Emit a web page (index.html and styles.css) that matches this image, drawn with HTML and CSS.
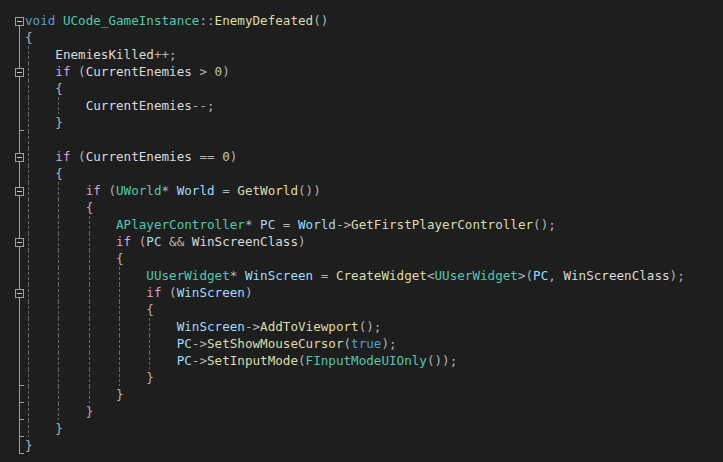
FILE: index.html
```html
<!DOCTYPE html>
<html lang="en">
<head>
  <meta charset="UTF-8" />
  <title>UCode_GameInstance.cpp</title>
  <link rel="stylesheet" href="styles.css">
</head>
<body>

<!-- Editor -->
<div class="editor">
  <div class="line"><div class="fold first"><span class="box"></span></div><div class="code"><span class="kw">void</span> <span class="ty">UCode_GameInstance</span>::<span class="fn">EnemyDefeated</span>()</div></div>
  <div class="line"><div class="fold"></div><div class="code">{</div></div>
  <div class="line"><div class="fold"></div><div class="code"><span class="ind"></span><span class="mem">EnemiesKilled</span>++;</div></div>
  <div class="line"><div class="fold"><span class="box"></span></div><div class="code"><span class="ind"></span><span class="ctl">if</span> (<span class="mem">CurrentEnemies</span> &gt; <span class="num">0</span>)</div></div>
  <div class="line"><div class="fold"></div><div class="code"><span class="ind"></span>{</div></div>
  <div class="line"><div class="fold"></div><div class="code"><span class="ind"></span><span class="ind"></span><span class="mem">CurrentEnemies</span>--;</div></div>
  <div class="line"><div class="fold end"></div><div class="code"><span class="ind"></span>}</div></div>
  <div class="line"><div class="fold"></div><div class="code"><span class="ind"></span></div></div>
  <div class="line"><div class="fold"><span class="box"></span></div><div class="code"><span class="ind"></span><span class="ctl">if</span> (<span class="mem">CurrentEnemies</span> == <span class="num">0</span>)</div></div>
  <div class="line"><div class="fold"></div><div class="code"><span class="ind"></span>{</div></div>
  <div class="line"><div class="fold"><span class="box"></span></div><div class="code"><span class="ind"></span><span class="ind"></span><span class="ctl">if</span> (<span class="ty">UWorld</span>* <span class="loc">World</span> = <span class="fn">GetWorld</span>())</div></div>
  <div class="line"><div class="fold"></div><div class="code"><span class="ind"></span><span class="ind"></span>{</div></div>
  <div class="line"><div class="fold"></div><div class="code"><span class="ind"></span><span class="ind"></span><span class="ind"></span><span class="ty">APlayerController</span>* <span class="loc">PC</span> = <span class="loc">World</span>-&gt;<span class="fn">GetFirstPlayerController</span>();</div></div>
  <div class="line"><div class="fold"><span class="box"></span></div><div class="code"><span class="ind"></span><span class="ind"></span><span class="ind"></span><span class="ctl">if</span> (<span class="loc">PC</span> &amp;&amp; <span class="mem">WinScreenClass</span>)</div></div>
  <div class="line"><div class="fold"></div><div class="code"><span class="ind"></span><span class="ind"></span><span class="ind"></span>{</div></div>
  <div class="line"><div class="fold"></div><div class="code"><span class="ind"></span><span class="ind"></span><span class="ind"></span><span class="ind"></span><span class="ty">UUserWidget</span>* <span class="loc">WinScreen</span> = <span class="fn">CreateWidget</span>&lt;<span class="ty">UUserWidget</span>&gt;(<span class="loc">PC</span>, <span class="mem">WinScreenClass</span>);</div></div>
  <div class="line"><div class="fold"><span class="box"></span></div><div class="code"><span class="ind"></span><span class="ind"></span><span class="ind"></span><span class="ind"></span><span class="ctl">if</span> (<span class="loc">WinScreen</span>)</div></div>
  <div class="line"><div class="fold"></div><div class="code"><span class="ind"></span><span class="ind"></span><span class="ind"></span><span class="ind"></span>{</div></div>
  <div class="line"><div class="fold"></div><div class="code"><span class="ind"></span><span class="ind"></span><span class="ind"></span><span class="ind"></span><span class="ind"></span><span class="loc">WinScreen</span>-&gt;<span class="fn">AddToViewport</span>();</div></div>
  <div class="line"><div class="fold"></div><div class="code"><span class="ind"></span><span class="ind"></span><span class="ind"></span><span class="ind"></span><span class="ind"></span><span class="loc">PC</span>-&gt;<span class="fn">SetShowMouseCursor</span>(<span class="kw">true</span>);</div></div>
  <div class="line"><div class="fold"></div><div class="code"><span class="ind"></span><span class="ind"></span><span class="ind"></span><span class="ind"></span><span class="ind"></span><span class="loc">PC</span>-&gt;<span class="fn">SetInputMode</span>(<span class="ty">FInputModeUIOnly</span>());</div></div>
  <div class="line"><div class="fold end"></div><div class="code"><span class="ind"></span><span class="ind"></span><span class="ind"></span><span class="ind"></span>}</div></div>
  <div class="line"><div class="fold end"></div><div class="code"><span class="ind"></span><span class="ind"></span><span class="ind"></span>}</div></div>
  <div class="line"><div class="fold end"></div><div class="code"><span class="ind"></span><span class="ind"></span>}</div></div>
  <div class="line"><div class="fold end"></div><div class="code"><span class="ind"></span>}</div></div>
  <div class="line"><div class="fold end"></div><div class="code">}</div></div>
</div>

</body>
</html>
```

FILE: styles.css
```css
body {
  margin: 0;
  background-color: #1e1e1e;
  color: #b4b4b4;
  font-family: "DejaVu Sans Mono", "Liberation Mono", monospace;
  font-size: 12.6px;
}

.editor {
  padding-top: 12px;
}

.line {
  display: flex;
  height: 17px;
  line-height: 17px;
}

/* outlining margin */
.fold {
  width: 25px;
  flex-shrink: 0;
  display: flex;
  align-items: center;
  background: linear-gradient(#a0a0a0, #a0a0a0) no-repeat 19px 0 / 1px 100%;
}

.fold.first {
  background-position: 19px 100%;
  background-size: 1px 50%;
}

.fold.end {
  background:
    linear-gradient(#a0a0a0, #a0a0a0) no-repeat 19px 100% / 5px 1px,
    linear-gradient(#a0a0a0, #a0a0a0) no-repeat 19px 0 / 1px 100%;
}

.box {
  width: 9px;
  height: 9px;
  margin-left: 15px;
  margin-top: 1px;
  box-sizing: border-box;
  border: 1px solid #a0a0a0;
  background: #1e1e1e;
  display: flex;
  align-items: center;
  justify-content: center;
}

.box::before {
  content: "";
  width: 5px;
  height: 1px;
  background: #c8c8c8;
}

.code {
  white-space: pre;
}

/* indent guides */
.ind {
  display: inline-block;
  width: 4ch;
  height: 17px;
  vertical-align: top;
  background: repeating-linear-gradient(to bottom, #6a6a6a 0 3px, transparent 3px 5px) no-repeat 3px 0 / 1px 100%;
}

.kw  { color: #569cd6; }
.ctl { color: #d8a0df; }
.ty  { color: #4ec9b0; }
.fn  { color: #dcdcaa; }
.mem { color: #dadada; }
.loc { color: #9cdcfe; }
.num { color: #b5cea8; }
```
